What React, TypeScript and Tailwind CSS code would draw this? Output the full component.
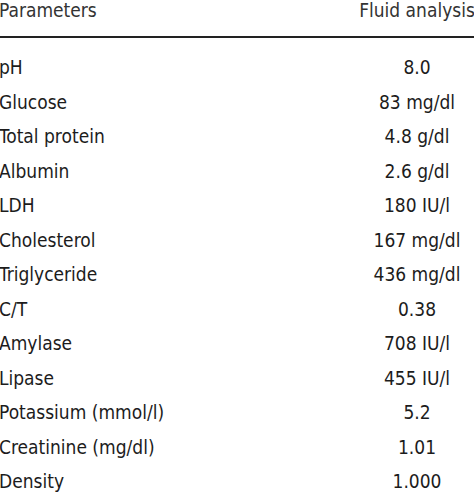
import React from 'react'

const rows: [string, string][] = [
  ['pH', '8.0'],
  ['Glucose', '83 mg/dl'],
  ['Total protein', '4.8 g/dl'],
  ['Albumin', '2.6 g/dl'],
  ['LDH', '180 IU/l'],
  ['Cholesterol', '167 mg/dl'],
  ['Triglyceride', '436 mg/dl'],
  ['C/T', '0.38'],
  ['Amylase', '708 IU/l'],
  ['Lipase', '455 IU/l'],
  ['Potassium (mmol/l)', '5.2'],
  ['Creatinine (mg/dl)', '1.01'],
  ['Density', '1.000'],
]

export default function App() {
  return (
    <div className="w-[474px] h-[495px] overflow-hidden bg-white text-[#1c1c1c] font-['DejaVu_Sans_Condensed','DejaVu_Sans',sans-serif] text-[19px]">
      {/* header */}
      <div className="flex items-start justify-between h-[38px] border-b-2 border-[#222] leading-[20px] text-[#333] whitespace-nowrap">
        <span className="-ml-px">Parameters</span>
        <span className="w-[114px] flex justify-center">Fluid analysis</span>
      </div>

      <div className="pt-[12px]">
        {rows.map(([name, value]) => (
          <div key={name} className="flex items-center justify-between h-[34.5px] leading-[20px] whitespace-nowrap">
            <span className="-ml-px">{name}</span>
            <span className="w-[114px] text-center">{value}</span>
          </div>
        ))}
      </div>
    </div>
  )
}
